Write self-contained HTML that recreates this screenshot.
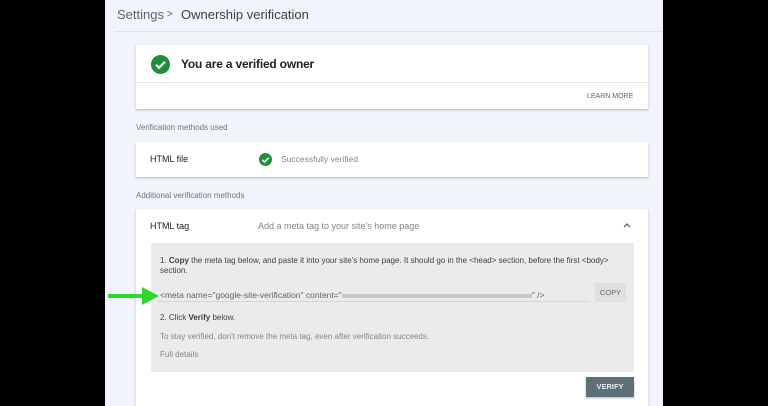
<!DOCTYPE html><html style="height:406px;overflow:hidden"><head><style>
body{margin:0;width:768px;height:406px;background:#000;position:relative;overflow:hidden;font-family:"Liberation Sans",sans-serif;}
.a{position:absolute}
.main{left:105px;top:0;width:558px;height:406px;background:#f1f4fa}
.card{background:#fff;box-shadow:0 1px 2px rgba(0,0,0,.25)}
.t{white-space:nowrap}
</style></head><body>
<div class="a main"></div>
<div class="a t" style="left:117px;top:7px;font-size:13px;color:#5f6368">Settings</div>
<div class="a t" style="left:167px;top:9px;font-size:10px;color:#5f6368">&gt;</div>
<div class="a t" style="left:181px;top:7px;font-size:13px;color:#3c4043">Ownership verification</div>
<div class="a" style="left:114px;top:31px;width:549px;height:1px;background:#dde1e8"></div>

<div class="a card" style="left:136px;top:45px;width:512px;height:64px"></div>
<div class="a" style="left:136px;top:82px;width:512px;height:1px;background:#e6e6e6"></div>
<svg class="a" style="left:151px;top:55px" width="19" height="19"><circle cx="9.5" cy="9.5" r="9.5" fill="#1e8e3e"/><path d="M5 9.8l3 3 6-6" stroke="#fff" stroke-width="2.2" fill="none"/></svg>
<div class="a t" style="left:181px;top:57px;font-size:12px;color:#202124;font-weight:bold;letter-spacing:-0.2px">You are a verified owner</div>
<div class="a t" style="left:587px;top:93px;font-size:7px;color:#5f6368">LEARN MORE</div>

<div class="a t" style="left:136px;top:123px;font-size:8px;color:#70757a">Verification methods used</div>
<div class="a card" style="left:136px;top:142px;width:512px;height:35px"></div>
<div class="a t" style="left:150px;top:154px;font-size:9px;color:#202124">HTML file</div>
<svg class="a" style="left:259px;top:153px" width="13" height="13"><circle cx="6.5" cy="6.5" r="6.5" fill="#1e8e3e"/><path d="M3.3 6.8l2.2 2.2 4.2-4.2" stroke="#fff" stroke-width="1.6" fill="none"/></svg>
<div class="a t" style="left:281px;top:154px;font-size:8.5px;color:#80868b">Successfully verified</div>

<div class="a t" style="left:136px;top:191px;font-size:8px;color:#70757a">Additional verification methods</div>
<div class="a card" style="left:136px;top:209px;width:512px;height:197px"></div>
<div class="a t" style="left:150px;top:221px;font-size:9px;color:#202124">HTML tag</div>
<div class="a t" style="left:258px;top:221px;font-size:9px;color:#80868b">Add a meta tag to your site's home page</div>
<svg class="a" style="left:623px;top:222px" width="8" height="6"><path d="M1 5l3-3 3 3" stroke="#5f6368" stroke-width="1.3" fill="none"/></svg>

<div class="a" style="left:151px;top:243px;width:483px;height:129px;background:#ebebeb"></div>
<div class="a t" style="left:160px;top:256px;font-size:8px;color:#3c4043;line-height:10px">1. <b>Copy</b> the meta tag below, and paste it into your site's home page. It should go in the &lt;head&gt; section, before the first &lt;body&gt;<br>section.</div>
<div class="a t" style="left:160px;top:290px;font-size:8.5px;color:#5f6368">&lt;meta name="google-site-verification" content="<span style="display:inline-block;width:190px;height:4px;background:#c8c8c8;vertical-align:middle"></span>" /&gt;</div>
<div class="a" style="left:157px;top:301px;width:433px;height:1px;background:#d6d6d6"></div>
<div class="a t" style="left:595px;top:283px;width:31px;height:19px;background:#e0e0e0;font-size:7.5px;color:#5f6368;text-align:center;line-height:19px">COPY</div>
<div class="a t" style="left:160px;top:313px;font-size:8px;color:#3c4043">2. Click <b>Verify</b> below.</div>
<div class="a t" style="left:160px;top:332px;font-size:8px;color:#80868b">To stay verified, don't remove the meta tag, even after verification succeeds.</div>
<div class="a t" style="left:160px;top:350px;font-size:8px;color:#80868b">Full details</div>
<div class="a t" style="left:586px;top:377px;width:48px;height:20px;background:#5f6f79;color:#e8eef2;font-size:7.5px;font-weight:bold;text-align:center;line-height:20px;box-shadow:0 1px 2px rgba(0,0,0,.3)">VERIFY</div>

<svg class="a" style="left:108px;top:286px" width="52" height="20"><path d="M0 8h34V1l17 9-17 9v-7H0z" fill="#2bd82b"/></svg>
</body></html>
